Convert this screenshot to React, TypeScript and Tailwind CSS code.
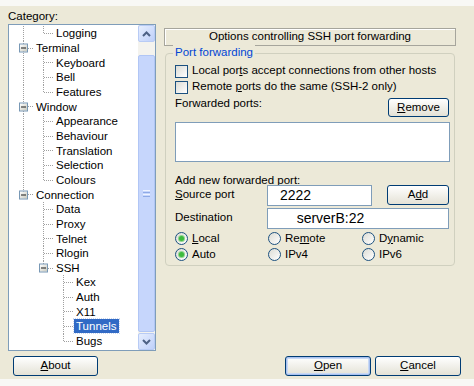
import React from 'react';

type Guide = 'pipe' | 'tee' | 'elbow' | 'none';
type TreeNode = { label: string; guides: Guide[]; box?: boolean; selected?: boolean };

const tree: TreeNode[] = [
  { label: 'Logging', guides: ['pipe', 'elbow'] },
  { label: 'Terminal', guides: ['tee'], box: true },
  { label: 'Keyboard', guides: ['pipe', 'tee'] },
  { label: 'Bell', guides: ['pipe', 'tee'] },
  { label: 'Features', guides: ['pipe', 'elbow'] },
  { label: 'Window', guides: ['tee'], box: true },
  { label: 'Appearance', guides: ['pipe', 'tee'] },
  { label: 'Behaviour', guides: ['pipe', 'tee'] },
  { label: 'Translation', guides: ['pipe', 'tee'] },
  { label: 'Selection', guides: ['pipe', 'tee'] },
  { label: 'Colours', guides: ['pipe', 'elbow'] },
  { label: 'Connection', guides: ['elbow'], box: true },
  { label: 'Data', guides: ['none', 'tee'] },
  { label: 'Proxy', guides: ['none', 'tee'] },
  { label: 'Telnet', guides: ['none', 'tee'] },
  { label: 'Rlogin', guides: ['none', 'tee'] },
  { label: 'SSH', guides: ['none', 'elbow'], box: true },
  { label: 'Kex', guides: ['none', 'none', 'tee'] },
  { label: 'Auth', guides: ['none', 'none', 'tee'] },
  { label: 'X11', guides: ['none', 'none', 'tee'] },
  { label: 'Tunnels', guides: ['none', 'none', 'tee'], selected: true },
  { label: 'Bugs', guides: ['none', 'none', 'elbow'] },
];

const GuideCell = ({ kind, box }: { kind: Guide; box?: boolean }) => (
  <span className="relative h-full w-[20px] shrink-0">
    <svg className="absolute inset-0 h-full w-full" stroke="#a0a0a0" strokeDasharray="1 1" shapeRendering="crispEdges">
      {kind !== 'none' && <line x1="10.5" y1="0" x2="10.5" y2={kind === 'elbow' ? '50%' : '100%'} />}
      {(kind === 'tee' || kind === 'elbow') && <line x1="10.5" y1="50%" x2="20" y2="50%" />}
    </svg>
    {box && (
      <span className="absolute left-[6px] top-1/2 flex h-[9px] w-[9px] -translate-y-1/2 items-center justify-center border border-[#7898b5] bg-linear-to-br from-white to-[#c9c9bd]">
        <span className="h-px w-[5px] bg-[#1a1a1a]" />
      </span>
    )}
  </span>
);

const Chevron = ({ down }: { down?: boolean }) => (
  <svg width="9" height="6" viewBox="0 0 9 6" fill="none" stroke="#4d6185" strokeWidth="2">
    {down ? <path d="M1 1 L4.5 4.5 L8 1" /> : <path d="M1 5 L4.5 1.5 L8 5" />}
  </svg>
);

const ScrollButton = ({ down }: { down?: boolean }) => (
  <div className="flex h-[17px] items-center justify-center rounded-[2px] border border-[#b8cbf5] bg-linear-to-br from-[#e6eefe] to-[#bfd0fa]">
    <Chevron down={down} />
  </div>
);

const Checkbox = () => (
  <span className="h-[13px] w-[13px] shrink-0 border border-[#1c5180] bg-linear-to-br from-[#dcdcd5] to-white" />
);

const Radio = ({ checked }: { checked?: boolean }) => (
  <span className="flex h-[13px] w-[13px] shrink-0 items-center justify-center rounded-full border border-[#1c5180] bg-linear-to-br from-[#dcdcd5] to-white">
    {checked && <span className="h-[5px] w-[5px] rounded-full bg-[#3dbb3d] ring-1 ring-[#8fd38f]" />}
  </span>
);

const Button = ({ children, className = '' }: { children: React.ReactNode; className?: string }) => (
  <button className={`flex items-center justify-center rounded-[3px] border border-[#003c74] bg-linear-to-b from-white to-[#e4e2d6] ${className}`}>
    {children}
  </button>
);

export default function App() {
  return (
    <div className="flex h-[386px] w-[474px] flex-col bg-[#f8f8f5] font-['Liberation_Sans',Arial,sans-serif] text-[11.5px] text-black">
      <div className="h-[6px]" />
      <div className="flex h-[373px] flex-col bg-[#ece9d8]">
        <div className="flex pt-[2px]">
          {/* category tree */}
          <div className="ml-[8px] flex w-[148px] flex-col">
            <div className="h-[16px] leading-[16px]">Category:</div>
            <div className="flex h-[327px] border border-[#7f9db9] bg-white">
              <div className="flex-1 overflow-hidden pt-px">
                {tree.map((n) => (
                  <div key={n.label} className="flex h-[14.67px] items-center pl-[4px]">
                    {n.guides.map((g, i) => (
                      <GuideCell key={i} kind={g} box={n.box && i === n.guides.length - 1} />
                    ))}
                    <span
                      className={`ml-px whitespace-nowrap px-[2px] leading-[14px] ${
                        n.selected ? 'bg-[#316ac5] text-white outline-1 outline-dotted outline-[#c9d6ee]' : ''
                      }`}
                    >
                      {n.label}
                    </span>
                  </div>
                ))}
              </div>
              <div className="flex w-[17px] flex-col bg-[#f4f3ee]">
                <ScrollButton />
                <div className="mb-px mt-[13px] flex flex-1 items-center justify-center rounded-[2px] border border-[#b1c6f5] bg-[#c6d6fc]">
                  <div className="flex flex-col gap-[1px]">
                    <span className="h-px w-[7px] bg-[#eef3ff]" />
                    <span className="h-px w-[7px] bg-[#8faae6]" />
                    <span className="h-px w-[7px] bg-[#eef3ff]" />
                    <span className="h-px w-[7px] bg-[#8faae6]" />
                  </div>
                </div>
                <ScrollButton down />
              </div>
            </div>
          </div>

          {/* settings panel */}
          <div className="ml-[8px] flex w-[292px] flex-col">
            <div className="mt-[20px] flex h-[18px] items-center justify-center border border-[#a6a59c] shadow-[inset_1px_1px_0_#fff]">
              Options controlling SSH port forwarding
            </div>
            <div className="relative ml-px mt-[7px] flex h-[213px] w-[290px] flex-col rounded-[4px] border border-[#d0d0bf] pl-[9px] pr-[5px] pt-[9px]">
              <span className="absolute -top-[9px] left-[7px] bg-[#ece9d8] px-[2px] leading-[14px] text-[#0046d5]">Port forwarding</span>
              <div className="flex h-[16px] items-center gap-[4px]">
                <Checkbox />
                <span>
                  Local por<u>t</u>s accept connections from other hosts
                </span>
              </div>
              <div className="flex h-[16px] items-center gap-[4px]">
                <Checkbox />
                <span>
                  Remote <u>p</u>orts do the same (SSH-2 only)
                </span>
              </div>
              <div className="flex h-[24px] items-start justify-between">
                <span className="leading-[16px]">Forwarded ports:</span>
                <Button className="mt-[3px] h-[19px] w-[61px]">
                  <span>
                    <u>R</u>emove
                  </span>
                </Button>
              </div>
              <div className="mt-[3px] h-[40px] w-[275px] border border-[#7f9db9] bg-white" />
              <div className="mt-[11px] h-[12px] leading-[14px]">Add new forwarded port:</div>
              <div className="flex h-[20px] items-center">
                <span className="w-[92px]">
                  <u>S</u>ource port
                </span>
                <div className="flex h-[21px] w-[105px] items-center border border-[#7f9db9] bg-white pl-[12px] text-[14px]">2222</div>
                <Button className="ml-auto h-[20px] w-[62px]">
                  <span>
                    A<u>d</u>d
                  </span>
                </Button>
              </div>
              <div className="mt-[3px] flex h-[20px] items-center">
                <span className="w-[92px]">Destination</span>
                <div className="flex h-[21px] w-[183px] items-center border border-[#7f9db9] bg-white pl-[29px] text-[14px]">serverB:22</div>
              </div>
              <div className="mt-[2px] grid h-[16px] grid-cols-[93px_94px_1fr] items-center">
                <span className="flex items-center gap-[4px]">
                  <Radio checked />
                  <span>
                    <u>L</u>ocal
                  </span>
                </span>
                <span className="flex items-center gap-[4px]">
                  <Radio />
                  <span>
                    Re<u>m</u>ote
                  </span>
                </span>
                <span className="flex items-center gap-[4px]">
                  <Radio />
                  <span>
                    D<u>y</u>namic
                  </span>
                </span>
              </div>
              <div className="grid h-[16px] grid-cols-[93px_94px_1fr] items-center">
                <span className="flex items-center gap-[4px]">
                  <Radio checked />
                  <span>Auto</span>
                </span>
                <span className="flex items-center gap-[4px]">
                  <Radio />
                  <span>IPv4</span>
                </span>
                <span className="flex items-center gap-[4px]">
                  <Radio />
                  <span>IPv6</span>
                </span>
              </div>
            </div>
          </div>
        </div>

        {/* dialog buttons */}
        <div className="mt-[5px] flex pl-[13px] pr-[13px]">
          <Button className="h-[20px] w-[85px]">
            <span>
              <u>A</u>bout
            </span>
          </Button>
          <Button className="ml-auto h-[20px] w-[86px] shadow-[inset_0_0_0_1px_#a9c1ef,inset_0_0_0_2px_#c8d9f5]">
            <span>
              <u>O</u>pen
            </span>
          </Button>
          <Button className="ml-[4px] h-[20px] w-[86px]">
            <span>
              <u>C</u>ancel
            </span>
          </Button>
        </div>
      </div>
    </div>
  );
}
